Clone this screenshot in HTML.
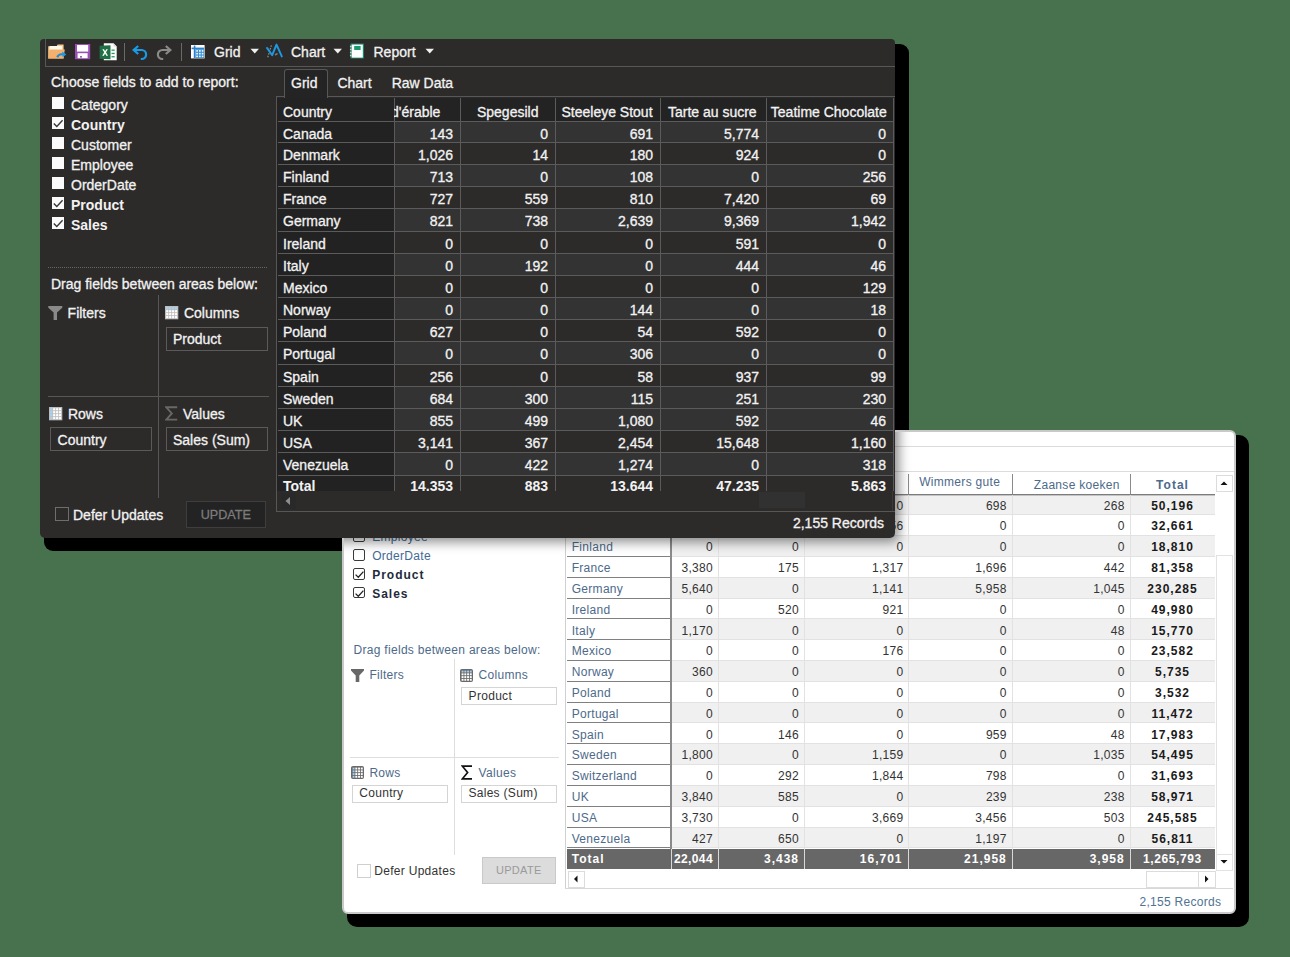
<!DOCTYPE html><html><head><meta charset="utf-8"><style>
html,body{margin:0;padding:0;}
body{width:1290px;height:957px;background:#48724d;position:relative;overflow:hidden;font-family:"Liberation Sans",sans-serif;}
.t{position:absolute;white-space:nowrap;line-height:normal;}
.dk .t{-webkit-text-stroke:0.3px currentColor;}
.dk .t.b{-webkit-text-stroke:0;}
</style></head><body>
<div style="position:absolute;left:44px;top:44px;width:865px;height:507px;background:#000;border-radius:9px;"></div>
<div style="position:absolute;left:347px;top:435px;width:902px;height:492px;background:#000;border-radius:10px;"></div>
<div style="position:absolute;left:342px;top:430px;width:890px;height:480px;background:#fff;border:2px solid #c9c9c9;border-radius:6px;overflow:hidden">
</div>
<div style="position:absolute;left:344px;top:446px;width:890px;height:1px;background:#dcdcdc;"></div>
<div style="position:absolute;left:344px;top:471px;width:890px;height:1px;background:#dcdcdc;"></div>
<div style="position:absolute;left:353px;top:530.4000000000001px;width:9.5px;height:9.5px;border:1.6px solid #3a3a3a;border-radius:2px;background:#fff;"></div>
<div class="t" style="left:372.20px;top:530.34px;font-size:12px;color:#3f6a96;font-weight:normal;letter-spacing:0.3px;">Employee</div>
<div style="position:absolute;left:353px;top:549.1px;width:9.5px;height:9.5px;border:1.6px solid #3a3a3a;border-radius:2px;background:#fff;"></div>
<div class="t" style="left:372.20px;top:549.04px;font-size:12px;color:#3f6a96;font-weight:normal;letter-spacing:0.3px;">OrderDate</div>
<div style="position:absolute;left:353px;top:568.0px;width:9.5px;height:9.5px;border:1.6px solid #3a3a3a;border-radius:2px;background:#fff;"></div>
<svg style="position:absolute;left:353px;top:568.0px" width="13" height="13" viewBox="0 0 13 13"><path d="M2.6 6.6 L5.3 9.2 L10.4 3.6" fill="none" stroke="#222" stroke-width="1.3"/></svg>
<div class="t b" style="left:372.20px;top:567.94px;font-size:12px;color:#1e2b3b;font-weight:bold;letter-spacing:1px;">Product</div>
<div style="position:absolute;left:353px;top:586.8000000000001px;width:9.5px;height:9.5px;border:1.6px solid #3a3a3a;border-radius:2px;background:#fff;"></div>
<svg style="position:absolute;left:353px;top:586.8000000000001px" width="13" height="13" viewBox="0 0 13 13"><path d="M2.6 6.6 L5.3 9.2 L10.4 3.6" fill="none" stroke="#222" stroke-width="1.3"/></svg>
<div class="t b" style="left:372.20px;top:586.74px;font-size:12px;color:#1e2b3b;font-weight:bold;letter-spacing:1px;">Sales</div>
<div class="t" style="left:353.50px;top:643.24px;font-size:12px;color:#4d6a8a;font-weight:normal;letter-spacing:0.3px;">Drag fields between areas below:</div>
<div style="position:absolute;left:454px;top:659px;width:1px;height:196px;background:#dedede;"></div>
<div style="position:absolute;left:350px;top:757px;width:209px;height:1px;background:#dedede;"></div>
<svg style="position:absolute;left:351px;top:669px" width="13" height="13" viewBox="0 0 13 13"><path d="M0 0 H13 V1.6 L8.3 6.4 V13 H4.7 V6.4 L0 1.6 Z" fill="#686868"/></svg>
<div class="t" style="left:369.40px;top:667.94px;font-size:12px;color:#4d6a8a;font-weight:normal;letter-spacing:0.3px;">Filters</div>
<svg style="position:absolute;left:460px;top:669px" width="13" height="13" viewBox="0 0 13 13"><rect x="0.5" y="0.5" width="12" height="12" fill="#6a6a6a" stroke="#6a6a6a" stroke-width="1" rx="1"/><rect x="1.60" y="1.60" width="1.9" height="1.9" fill="#9fd0f5"/><rect x="4.35" y="1.60" width="1.9" height="1.9" fill="#9fd0f5"/><rect x="7.10" y="1.60" width="1.9" height="1.9" fill="#9fd0f5"/><rect x="9.85" y="1.60" width="1.9" height="1.9" fill="#9fd0f5"/><rect x="1.60" y="4.35" width="1.9" height="1.9" fill="#fff"/><rect x="4.35" y="4.35" width="1.9" height="1.9" fill="#fff"/><rect x="7.10" y="4.35" width="1.9" height="1.9" fill="#fff"/><rect x="9.85" y="4.35" width="1.9" height="1.9" fill="#fff"/><rect x="1.60" y="7.10" width="1.9" height="1.9" fill="#fff"/><rect x="4.35" y="7.10" width="1.9" height="1.9" fill="#fff"/><rect x="7.10" y="7.10" width="1.9" height="1.9" fill="#fff"/><rect x="9.85" y="7.10" width="1.9" height="1.9" fill="#fff"/><rect x="1.60" y="9.85" width="1.9" height="1.9" fill="#fff"/><rect x="4.35" y="9.85" width="1.9" height="1.9" fill="#fff"/><rect x="7.10" y="9.85" width="1.9" height="1.9" fill="#fff"/><rect x="9.85" y="9.85" width="1.9" height="1.9" fill="#fff"/></svg>
<div class="t" style="left:478.60px;top:667.94px;font-size:12px;color:#4d6a8a;font-weight:normal;letter-spacing:0.3px;">Columns</div>
<div style="position:absolute;left:461px;top:687px;width:94px;height:16px;border:1px solid #d4d4d4;background:#fff;"></div>
<div class="t" style="left:468.60px;top:688.94px;font-size:12px;color:#333;font-weight:normal;letter-spacing:0.3px;">Product</div>
<svg style="position:absolute;left:351px;top:766px" width="13" height="13" viewBox="0 0 13 13"><rect x="0.5" y="0.5" width="12" height="12" fill="#6a6a6a" stroke="#6a6a6a" stroke-width="1" rx="1"/><rect x="1.60" y="1.60" width="1.9" height="1.9" fill="#9fd0f5"/><rect x="4.35" y="1.60" width="1.9" height="1.9" fill="#fff"/><rect x="7.10" y="1.60" width="1.9" height="1.9" fill="#fff"/><rect x="9.85" y="1.60" width="1.9" height="1.9" fill="#fff"/><rect x="1.60" y="4.35" width="1.9" height="1.9" fill="#9fd0f5"/><rect x="4.35" y="4.35" width="1.9" height="1.9" fill="#fff"/><rect x="7.10" y="4.35" width="1.9" height="1.9" fill="#fff"/><rect x="9.85" y="4.35" width="1.9" height="1.9" fill="#fff"/><rect x="1.60" y="7.10" width="1.9" height="1.9" fill="#9fd0f5"/><rect x="4.35" y="7.10" width="1.9" height="1.9" fill="#fff"/><rect x="7.10" y="7.10" width="1.9" height="1.9" fill="#fff"/><rect x="9.85" y="7.10" width="1.9" height="1.9" fill="#fff"/><rect x="1.60" y="9.85" width="1.9" height="1.9" fill="#9fd0f5"/><rect x="4.35" y="9.85" width="1.9" height="1.9" fill="#fff"/><rect x="7.10" y="9.85" width="1.9" height="1.9" fill="#fff"/><rect x="9.85" y="9.85" width="1.9" height="1.9" fill="#fff"/></svg>
<div class="t" style="left:369.40px;top:765.64px;font-size:12px;color:#4d6a8a;font-weight:normal;letter-spacing:0.3px;">Rows</div>
<svg style="position:absolute;left:461px;top:765px" width="12" height="15" viewBox="0 0 12 15"><path d="M11 1.2 H1.4 L6.6 7.5 L1.4 13.8 H11" fill="none" stroke="#111" stroke-width="1.7"/></svg>
<div class="t" style="left:478.60px;top:765.64px;font-size:12px;color:#4d6a8a;font-weight:normal;letter-spacing:0.3px;">Values</div>
<div style="position:absolute;left:352px;top:784.5px;width:94px;height:16px;border:1px solid #d4d4d4;background:#fff;"></div>
<div class="t" style="left:359.30px;top:786.44px;font-size:12px;color:#333;font-weight:normal;letter-spacing:0.3px;">Country</div>
<div style="position:absolute;left:461px;top:784.5px;width:94px;height:16px;border:1px solid #d4d4d4;background:#fff;"></div>
<div class="t" style="left:468.40px;top:786.44px;font-size:12px;color:#333;font-weight:normal;letter-spacing:0.3px;">Sales (Sum)</div>
<div style="position:absolute;left:357px;top:864px;width:12px;height:12px;border:1px solid #cfcfcf;background:#fff;"></div>
<div class="t" style="left:374.20px;top:863.94px;font-size:12px;color:#333;font-weight:normal;letter-spacing:0.3px;">Defer Updates</div>
<div style="position:absolute;left:482px;top:857px;width:72px;height:25px;border:1px solid #c9c9c9;background:#dcdcdc;"></div>
<div class="t" style="left:483.80px;top:864.34px;width:70px;text-align:center;font-size:11px;color:#9a9a9a;font-weight:normal;letter-spacing:0.3px;">UPDATE</div>
<div style="position:absolute;left:565px;top:471px;width:1px;height:418px;background:#d0d0d0;"></div>
<div style="position:absolute;left:565px;top:888px;width:668px;height:1px;background:#d8d8d8;"></div>
<div style="position:absolute;left:567px;top:494px;width:648px;height:1px;background:#7c7c7c;"></div>
<div style="position:absolute;left:567px;top:495px;width:648px;height:1px;background:#c4c4c4;"></div>
<div style="position:absolute;left:908px;top:474px;width:1px;height:20px;background:#8a8a8a;"></div>
<div style="position:absolute;left:1012px;top:474px;width:1px;height:20px;background:#8a8a8a;"></div>
<div style="position:absolute;left:1130px;top:474px;width:1px;height:20px;background:#8a8a8a;"></div>
<div style="position:absolute;left:671px;top:496px;width:544px;height:18px;background:#f0f0f0;"></div>
<div style="position:absolute;left:671px;top:514px;width:544px;height:1px;background:#e2e2e2;"></div>
<div style="position:absolute;left:567px;top:514px;width:104px;height:1px;background:#808080;"></div>
<div class="t" style="left:571.70px;top:498.64px;font-size:12px;color:#4d6a8a;font-weight:normal;letter-spacing:0.3px;">Canada</div>
<div class="t" style="left:803.50px;top:498.64px;width:100px;text-align:right;font-size:12px;color:#333;font-weight:normal;letter-spacing:0.3px;">0</div>
<div class="t" style="left:906.80px;top:498.64px;width:100px;text-align:right;font-size:12px;color:#333;font-weight:normal;letter-spacing:0.3px;">698</div>
<div class="t" style="left:1024.70px;top:498.64px;width:100px;text-align:right;font-size:12px;color:#333;font-weight:normal;letter-spacing:0.3px;">268</div>
<div class="t b" style="left:1130.50px;top:498.64px;width:84px;text-align:center;font-size:12px;color:#1a1a1a;font-weight:bold;letter-spacing:1px;">50,196</div>
<div style="position:absolute;left:671px;top:515px;width:544px;height:20px;background:#ffffff;"></div>
<div style="position:absolute;left:671px;top:535px;width:544px;height:1px;background:#e2e2e2;"></div>
<div style="position:absolute;left:567px;top:535px;width:104px;height:1px;background:#808080;"></div>
<div class="t" style="left:571.70px;top:519.46px;font-size:12px;color:#4d6a8a;font-weight:normal;letter-spacing:0.3px;">Denmark</div>
<div class="t" style="left:803.50px;top:519.46px;width:100px;text-align:right;font-size:12px;color:#333;font-weight:normal;letter-spacing:0.3px;">356</div>
<div class="t" style="left:906.80px;top:519.46px;width:100px;text-align:right;font-size:12px;color:#333;font-weight:normal;letter-spacing:0.3px;">0</div>
<div class="t" style="left:1024.70px;top:519.46px;width:100px;text-align:right;font-size:12px;color:#333;font-weight:normal;letter-spacing:0.3px;">0</div>
<div class="t b" style="left:1130.50px;top:519.46px;width:84px;text-align:center;font-size:12px;color:#1a1a1a;font-weight:bold;letter-spacing:1px;">32,661</div>
<div style="position:absolute;left:671px;top:536px;width:544px;height:20px;background:#f0f0f0;"></div>
<div style="position:absolute;left:671px;top:556px;width:544px;height:1px;background:#e2e2e2;"></div>
<div style="position:absolute;left:567px;top:556px;width:104px;height:1px;background:#808080;"></div>
<div class="t" style="left:571.70px;top:540.28px;font-size:12px;color:#4d6a8a;font-weight:normal;letter-spacing:0.3px;">Finland</div>
<div class="t" style="left:613.00px;top:540.28px;width:100px;text-align:right;font-size:12px;color:#333;font-weight:normal;letter-spacing:0.3px;">0</div>
<div class="t" style="left:699.00px;top:540.28px;width:100px;text-align:right;font-size:12px;color:#333;font-weight:normal;letter-spacing:0.3px;">0</div>
<div class="t" style="left:803.50px;top:540.28px;width:100px;text-align:right;font-size:12px;color:#333;font-weight:normal;letter-spacing:0.3px;">0</div>
<div class="t" style="left:906.80px;top:540.28px;width:100px;text-align:right;font-size:12px;color:#333;font-weight:normal;letter-spacing:0.3px;">0</div>
<div class="t" style="left:1024.70px;top:540.28px;width:100px;text-align:right;font-size:12px;color:#333;font-weight:normal;letter-spacing:0.3px;">0</div>
<div class="t b" style="left:1130.50px;top:540.28px;width:84px;text-align:center;font-size:12px;color:#1a1a1a;font-weight:bold;letter-spacing:1px;">18,810</div>
<div style="position:absolute;left:671px;top:557px;width:544px;height:20px;background:#ffffff;"></div>
<div style="position:absolute;left:671px;top:577px;width:544px;height:1px;background:#e2e2e2;"></div>
<div style="position:absolute;left:567px;top:577px;width:104px;height:1px;background:#808080;"></div>
<div class="t" style="left:571.70px;top:561.10px;font-size:12px;color:#4d6a8a;font-weight:normal;letter-spacing:0.3px;">France</div>
<div class="t" style="left:613.00px;top:561.10px;width:100px;text-align:right;font-size:12px;color:#333;font-weight:normal;letter-spacing:0.3px;">3,380</div>
<div class="t" style="left:699.00px;top:561.10px;width:100px;text-align:right;font-size:12px;color:#333;font-weight:normal;letter-spacing:0.3px;">175</div>
<div class="t" style="left:803.50px;top:561.10px;width:100px;text-align:right;font-size:12px;color:#333;font-weight:normal;letter-spacing:0.3px;">1,317</div>
<div class="t" style="left:906.80px;top:561.10px;width:100px;text-align:right;font-size:12px;color:#333;font-weight:normal;letter-spacing:0.3px;">1,696</div>
<div class="t" style="left:1024.70px;top:561.10px;width:100px;text-align:right;font-size:12px;color:#333;font-weight:normal;letter-spacing:0.3px;">442</div>
<div class="t b" style="left:1130.50px;top:561.10px;width:84px;text-align:center;font-size:12px;color:#1a1a1a;font-weight:bold;letter-spacing:1px;">81,358</div>
<div style="position:absolute;left:671px;top:578px;width:544px;height:20px;background:#f0f0f0;"></div>
<div style="position:absolute;left:671px;top:598px;width:544px;height:1px;background:#e2e2e2;"></div>
<div style="position:absolute;left:567px;top:598px;width:104px;height:1px;background:#808080;"></div>
<div class="t" style="left:571.70px;top:581.92px;font-size:12px;color:#4d6a8a;font-weight:normal;letter-spacing:0.3px;">Germany</div>
<div class="t" style="left:613.00px;top:581.92px;width:100px;text-align:right;font-size:12px;color:#333;font-weight:normal;letter-spacing:0.3px;">5,640</div>
<div class="t" style="left:699.00px;top:581.92px;width:100px;text-align:right;font-size:12px;color:#333;font-weight:normal;letter-spacing:0.3px;">0</div>
<div class="t" style="left:803.50px;top:581.92px;width:100px;text-align:right;font-size:12px;color:#333;font-weight:normal;letter-spacing:0.3px;">1,141</div>
<div class="t" style="left:906.80px;top:581.92px;width:100px;text-align:right;font-size:12px;color:#333;font-weight:normal;letter-spacing:0.3px;">5,958</div>
<div class="t" style="left:1024.70px;top:581.92px;width:100px;text-align:right;font-size:12px;color:#333;font-weight:normal;letter-spacing:0.3px;">1,045</div>
<div class="t b" style="left:1130.50px;top:581.92px;width:84px;text-align:center;font-size:12px;color:#1a1a1a;font-weight:bold;letter-spacing:1px;">230,285</div>
<div style="position:absolute;left:671px;top:599px;width:544px;height:19px;background:#ffffff;"></div>
<div style="position:absolute;left:671px;top:618px;width:544px;height:1px;background:#e2e2e2;"></div>
<div style="position:absolute;left:567px;top:618px;width:104px;height:1px;background:#808080;"></div>
<div class="t" style="left:571.70px;top:602.74px;font-size:12px;color:#4d6a8a;font-weight:normal;letter-spacing:0.3px;">Ireland</div>
<div class="t" style="left:613.00px;top:602.74px;width:100px;text-align:right;font-size:12px;color:#333;font-weight:normal;letter-spacing:0.3px;">0</div>
<div class="t" style="left:699.00px;top:602.74px;width:100px;text-align:right;font-size:12px;color:#333;font-weight:normal;letter-spacing:0.3px;">520</div>
<div class="t" style="left:803.50px;top:602.74px;width:100px;text-align:right;font-size:12px;color:#333;font-weight:normal;letter-spacing:0.3px;">921</div>
<div class="t" style="left:906.80px;top:602.74px;width:100px;text-align:right;font-size:12px;color:#333;font-weight:normal;letter-spacing:0.3px;">0</div>
<div class="t" style="left:1024.70px;top:602.74px;width:100px;text-align:right;font-size:12px;color:#333;font-weight:normal;letter-spacing:0.3px;">0</div>
<div class="t b" style="left:1130.50px;top:602.74px;width:84px;text-align:center;font-size:12px;color:#1a1a1a;font-weight:bold;letter-spacing:1px;">49,980</div>
<div style="position:absolute;left:671px;top:619px;width:544px;height:20px;background:#f0f0f0;"></div>
<div style="position:absolute;left:671px;top:639px;width:544px;height:1px;background:#e2e2e2;"></div>
<div style="position:absolute;left:567px;top:639px;width:104px;height:1px;background:#808080;"></div>
<div class="t" style="left:571.70px;top:623.56px;font-size:12px;color:#4d6a8a;font-weight:normal;letter-spacing:0.3px;">Italy</div>
<div class="t" style="left:613.00px;top:623.56px;width:100px;text-align:right;font-size:12px;color:#333;font-weight:normal;letter-spacing:0.3px;">1,170</div>
<div class="t" style="left:699.00px;top:623.56px;width:100px;text-align:right;font-size:12px;color:#333;font-weight:normal;letter-spacing:0.3px;">0</div>
<div class="t" style="left:803.50px;top:623.56px;width:100px;text-align:right;font-size:12px;color:#333;font-weight:normal;letter-spacing:0.3px;">0</div>
<div class="t" style="left:906.80px;top:623.56px;width:100px;text-align:right;font-size:12px;color:#333;font-weight:normal;letter-spacing:0.3px;">0</div>
<div class="t" style="left:1024.70px;top:623.56px;width:100px;text-align:right;font-size:12px;color:#333;font-weight:normal;letter-spacing:0.3px;">48</div>
<div class="t b" style="left:1130.50px;top:623.56px;width:84px;text-align:center;font-size:12px;color:#1a1a1a;font-weight:bold;letter-spacing:1px;">15,770</div>
<div style="position:absolute;left:671px;top:640px;width:544px;height:20px;background:#ffffff;"></div>
<div style="position:absolute;left:671px;top:660px;width:544px;height:1px;background:#e2e2e2;"></div>
<div style="position:absolute;left:567px;top:660px;width:104px;height:1px;background:#808080;"></div>
<div class="t" style="left:571.70px;top:644.38px;font-size:12px;color:#4d6a8a;font-weight:normal;letter-spacing:0.3px;">Mexico</div>
<div class="t" style="left:613.00px;top:644.38px;width:100px;text-align:right;font-size:12px;color:#333;font-weight:normal;letter-spacing:0.3px;">0</div>
<div class="t" style="left:699.00px;top:644.38px;width:100px;text-align:right;font-size:12px;color:#333;font-weight:normal;letter-spacing:0.3px;">0</div>
<div class="t" style="left:803.50px;top:644.38px;width:100px;text-align:right;font-size:12px;color:#333;font-weight:normal;letter-spacing:0.3px;">176</div>
<div class="t" style="left:906.80px;top:644.38px;width:100px;text-align:right;font-size:12px;color:#333;font-weight:normal;letter-spacing:0.3px;">0</div>
<div class="t" style="left:1024.70px;top:644.38px;width:100px;text-align:right;font-size:12px;color:#333;font-weight:normal;letter-spacing:0.3px;">0</div>
<div class="t b" style="left:1130.50px;top:644.38px;width:84px;text-align:center;font-size:12px;color:#1a1a1a;font-weight:bold;letter-spacing:1px;">23,582</div>
<div style="position:absolute;left:671px;top:661px;width:544px;height:20px;background:#f0f0f0;"></div>
<div style="position:absolute;left:671px;top:681px;width:544px;height:1px;background:#e2e2e2;"></div>
<div style="position:absolute;left:567px;top:681px;width:104px;height:1px;background:#808080;"></div>
<div class="t" style="left:571.70px;top:665.20px;font-size:12px;color:#4d6a8a;font-weight:normal;letter-spacing:0.3px;">Norway</div>
<div class="t" style="left:613.00px;top:665.20px;width:100px;text-align:right;font-size:12px;color:#333;font-weight:normal;letter-spacing:0.3px;">360</div>
<div class="t" style="left:699.00px;top:665.20px;width:100px;text-align:right;font-size:12px;color:#333;font-weight:normal;letter-spacing:0.3px;">0</div>
<div class="t" style="left:803.50px;top:665.20px;width:100px;text-align:right;font-size:12px;color:#333;font-weight:normal;letter-spacing:0.3px;">0</div>
<div class="t" style="left:906.80px;top:665.20px;width:100px;text-align:right;font-size:12px;color:#333;font-weight:normal;letter-spacing:0.3px;">0</div>
<div class="t" style="left:1024.70px;top:665.20px;width:100px;text-align:right;font-size:12px;color:#333;font-weight:normal;letter-spacing:0.3px;">0</div>
<div class="t b" style="left:1130.50px;top:665.20px;width:84px;text-align:center;font-size:12px;color:#1a1a1a;font-weight:bold;letter-spacing:1px;">5,735</div>
<div style="position:absolute;left:671px;top:682px;width:544px;height:20px;background:#ffffff;"></div>
<div style="position:absolute;left:671px;top:702px;width:544px;height:1px;background:#e2e2e2;"></div>
<div style="position:absolute;left:567px;top:702px;width:104px;height:1px;background:#808080;"></div>
<div class="t" style="left:571.70px;top:686.02px;font-size:12px;color:#4d6a8a;font-weight:normal;letter-spacing:0.3px;">Poland</div>
<div class="t" style="left:613.00px;top:686.02px;width:100px;text-align:right;font-size:12px;color:#333;font-weight:normal;letter-spacing:0.3px;">0</div>
<div class="t" style="left:699.00px;top:686.02px;width:100px;text-align:right;font-size:12px;color:#333;font-weight:normal;letter-spacing:0.3px;">0</div>
<div class="t" style="left:803.50px;top:686.02px;width:100px;text-align:right;font-size:12px;color:#333;font-weight:normal;letter-spacing:0.3px;">0</div>
<div class="t" style="left:906.80px;top:686.02px;width:100px;text-align:right;font-size:12px;color:#333;font-weight:normal;letter-spacing:0.3px;">0</div>
<div class="t" style="left:1024.70px;top:686.02px;width:100px;text-align:right;font-size:12px;color:#333;font-weight:normal;letter-spacing:0.3px;">0</div>
<div class="t b" style="left:1130.50px;top:686.02px;width:84px;text-align:center;font-size:12px;color:#1a1a1a;font-weight:bold;letter-spacing:1px;">3,532</div>
<div style="position:absolute;left:671px;top:703px;width:544px;height:19px;background:#f0f0f0;"></div>
<div style="position:absolute;left:671px;top:722px;width:544px;height:1px;background:#e2e2e2;"></div>
<div style="position:absolute;left:567px;top:722px;width:104px;height:1px;background:#808080;"></div>
<div class="t" style="left:571.70px;top:706.84px;font-size:12px;color:#4d6a8a;font-weight:normal;letter-spacing:0.3px;">Portugal</div>
<div class="t" style="left:613.00px;top:706.84px;width:100px;text-align:right;font-size:12px;color:#333;font-weight:normal;letter-spacing:0.3px;">0</div>
<div class="t" style="left:699.00px;top:706.84px;width:100px;text-align:right;font-size:12px;color:#333;font-weight:normal;letter-spacing:0.3px;">0</div>
<div class="t" style="left:803.50px;top:706.84px;width:100px;text-align:right;font-size:12px;color:#333;font-weight:normal;letter-spacing:0.3px;">0</div>
<div class="t" style="left:906.80px;top:706.84px;width:100px;text-align:right;font-size:12px;color:#333;font-weight:normal;letter-spacing:0.3px;">0</div>
<div class="t" style="left:1024.70px;top:706.84px;width:100px;text-align:right;font-size:12px;color:#333;font-weight:normal;letter-spacing:0.3px;">0</div>
<div class="t b" style="left:1130.50px;top:706.84px;width:84px;text-align:center;font-size:12px;color:#1a1a1a;font-weight:bold;letter-spacing:1px;">11,472</div>
<div style="position:absolute;left:671px;top:724px;width:544px;height:19px;background:#ffffff;"></div>
<div style="position:absolute;left:671px;top:743px;width:544px;height:1px;background:#e2e2e2;"></div>
<div style="position:absolute;left:567px;top:743px;width:104px;height:1px;background:#808080;"></div>
<div class="t" style="left:571.70px;top:727.66px;font-size:12px;color:#4d6a8a;font-weight:normal;letter-spacing:0.3px;">Spain</div>
<div class="t" style="left:613.00px;top:727.66px;width:100px;text-align:right;font-size:12px;color:#333;font-weight:normal;letter-spacing:0.3px;">0</div>
<div class="t" style="left:699.00px;top:727.66px;width:100px;text-align:right;font-size:12px;color:#333;font-weight:normal;letter-spacing:0.3px;">146</div>
<div class="t" style="left:803.50px;top:727.66px;width:100px;text-align:right;font-size:12px;color:#333;font-weight:normal;letter-spacing:0.3px;">0</div>
<div class="t" style="left:906.80px;top:727.66px;width:100px;text-align:right;font-size:12px;color:#333;font-weight:normal;letter-spacing:0.3px;">959</div>
<div class="t" style="left:1024.70px;top:727.66px;width:100px;text-align:right;font-size:12px;color:#333;font-weight:normal;letter-spacing:0.3px;">48</div>
<div class="t b" style="left:1130.50px;top:727.66px;width:84px;text-align:center;font-size:12px;color:#1a1a1a;font-weight:bold;letter-spacing:1px;">17,983</div>
<div style="position:absolute;left:671px;top:744px;width:544px;height:20px;background:#f0f0f0;"></div>
<div style="position:absolute;left:671px;top:764px;width:544px;height:1px;background:#e2e2e2;"></div>
<div style="position:absolute;left:567px;top:764px;width:104px;height:1px;background:#808080;"></div>
<div class="t" style="left:571.70px;top:748.48px;font-size:12px;color:#4d6a8a;font-weight:normal;letter-spacing:0.3px;">Sweden</div>
<div class="t" style="left:613.00px;top:748.48px;width:100px;text-align:right;font-size:12px;color:#333;font-weight:normal;letter-spacing:0.3px;">1,800</div>
<div class="t" style="left:699.00px;top:748.48px;width:100px;text-align:right;font-size:12px;color:#333;font-weight:normal;letter-spacing:0.3px;">0</div>
<div class="t" style="left:803.50px;top:748.48px;width:100px;text-align:right;font-size:12px;color:#333;font-weight:normal;letter-spacing:0.3px;">1,159</div>
<div class="t" style="left:906.80px;top:748.48px;width:100px;text-align:right;font-size:12px;color:#333;font-weight:normal;letter-spacing:0.3px;">0</div>
<div class="t" style="left:1024.70px;top:748.48px;width:100px;text-align:right;font-size:12px;color:#333;font-weight:normal;letter-spacing:0.3px;">1,035</div>
<div class="t b" style="left:1130.50px;top:748.48px;width:84px;text-align:center;font-size:12px;color:#1a1a1a;font-weight:bold;letter-spacing:1px;">54,495</div>
<div style="position:absolute;left:671px;top:765px;width:544px;height:20px;background:#ffffff;"></div>
<div style="position:absolute;left:671px;top:785px;width:544px;height:1px;background:#e2e2e2;"></div>
<div style="position:absolute;left:567px;top:785px;width:104px;height:1px;background:#808080;"></div>
<div class="t" style="left:571.70px;top:769.30px;font-size:12px;color:#4d6a8a;font-weight:normal;letter-spacing:0.3px;">Switzerland</div>
<div class="t" style="left:613.00px;top:769.30px;width:100px;text-align:right;font-size:12px;color:#333;font-weight:normal;letter-spacing:0.3px;">0</div>
<div class="t" style="left:699.00px;top:769.30px;width:100px;text-align:right;font-size:12px;color:#333;font-weight:normal;letter-spacing:0.3px;">292</div>
<div class="t" style="left:803.50px;top:769.30px;width:100px;text-align:right;font-size:12px;color:#333;font-weight:normal;letter-spacing:0.3px;">1,844</div>
<div class="t" style="left:906.80px;top:769.30px;width:100px;text-align:right;font-size:12px;color:#333;font-weight:normal;letter-spacing:0.3px;">798</div>
<div class="t" style="left:1024.70px;top:769.30px;width:100px;text-align:right;font-size:12px;color:#333;font-weight:normal;letter-spacing:0.3px;">0</div>
<div class="t b" style="left:1130.50px;top:769.30px;width:84px;text-align:center;font-size:12px;color:#1a1a1a;font-weight:bold;letter-spacing:1px;">31,693</div>
<div style="position:absolute;left:671px;top:786px;width:544px;height:20px;background:#f0f0f0;"></div>
<div style="position:absolute;left:671px;top:806px;width:544px;height:1px;background:#e2e2e2;"></div>
<div style="position:absolute;left:567px;top:806px;width:104px;height:1px;background:#808080;"></div>
<div class="t" style="left:571.70px;top:790.12px;font-size:12px;color:#4d6a8a;font-weight:normal;letter-spacing:0.3px;">UK</div>
<div class="t" style="left:613.00px;top:790.12px;width:100px;text-align:right;font-size:12px;color:#333;font-weight:normal;letter-spacing:0.3px;">3,840</div>
<div class="t" style="left:699.00px;top:790.12px;width:100px;text-align:right;font-size:12px;color:#333;font-weight:normal;letter-spacing:0.3px;">585</div>
<div class="t" style="left:803.50px;top:790.12px;width:100px;text-align:right;font-size:12px;color:#333;font-weight:normal;letter-spacing:0.3px;">0</div>
<div class="t" style="left:906.80px;top:790.12px;width:100px;text-align:right;font-size:12px;color:#333;font-weight:normal;letter-spacing:0.3px;">239</div>
<div class="t" style="left:1024.70px;top:790.12px;width:100px;text-align:right;font-size:12px;color:#333;font-weight:normal;letter-spacing:0.3px;">238</div>
<div class="t b" style="left:1130.50px;top:790.12px;width:84px;text-align:center;font-size:12px;color:#1a1a1a;font-weight:bold;letter-spacing:1px;">58,971</div>
<div style="position:absolute;left:671px;top:807px;width:544px;height:20px;background:#ffffff;"></div>
<div style="position:absolute;left:671px;top:827px;width:544px;height:1px;background:#e2e2e2;"></div>
<div style="position:absolute;left:567px;top:827px;width:104px;height:1px;background:#808080;"></div>
<div class="t" style="left:571.70px;top:810.94px;font-size:12px;color:#4d6a8a;font-weight:normal;letter-spacing:0.3px;">USA</div>
<div class="t" style="left:613.00px;top:810.94px;width:100px;text-align:right;font-size:12px;color:#333;font-weight:normal;letter-spacing:0.3px;">3,730</div>
<div class="t" style="left:699.00px;top:810.94px;width:100px;text-align:right;font-size:12px;color:#333;font-weight:normal;letter-spacing:0.3px;">0</div>
<div class="t" style="left:803.50px;top:810.94px;width:100px;text-align:right;font-size:12px;color:#333;font-weight:normal;letter-spacing:0.3px;">3,669</div>
<div class="t" style="left:906.80px;top:810.94px;width:100px;text-align:right;font-size:12px;color:#333;font-weight:normal;letter-spacing:0.3px;">3,456</div>
<div class="t" style="left:1024.70px;top:810.94px;width:100px;text-align:right;font-size:12px;color:#333;font-weight:normal;letter-spacing:0.3px;">503</div>
<div class="t b" style="left:1130.50px;top:810.94px;width:84px;text-align:center;font-size:12px;color:#1a1a1a;font-weight:bold;letter-spacing:1px;">245,585</div>
<div style="position:absolute;left:671px;top:828px;width:544px;height:19px;background:#f0f0f0;"></div>
<div style="position:absolute;left:671px;top:847px;width:544px;height:1px;background:#e2e2e2;"></div>
<div style="position:absolute;left:567px;top:847px;width:104px;height:1px;background:#808080;"></div>
<div class="t" style="left:571.70px;top:831.76px;font-size:12px;color:#4d6a8a;font-weight:normal;letter-spacing:0.3px;">Venezuela</div>
<div class="t" style="left:613.00px;top:831.76px;width:100px;text-align:right;font-size:12px;color:#333;font-weight:normal;letter-spacing:0.3px;">427</div>
<div class="t" style="left:699.00px;top:831.76px;width:100px;text-align:right;font-size:12px;color:#333;font-weight:normal;letter-spacing:0.3px;">650</div>
<div class="t" style="left:803.50px;top:831.76px;width:100px;text-align:right;font-size:12px;color:#333;font-weight:normal;letter-spacing:0.3px;">0</div>
<div class="t" style="left:906.80px;top:831.76px;width:100px;text-align:right;font-size:12px;color:#333;font-weight:normal;letter-spacing:0.3px;">1,197</div>
<div class="t" style="left:1024.70px;top:831.76px;width:100px;text-align:right;font-size:12px;color:#333;font-weight:normal;letter-spacing:0.3px;">0</div>
<div class="t b" style="left:1130.50px;top:831.76px;width:84px;text-align:center;font-size:12px;color:#1a1a1a;font-weight:bold;letter-spacing:1px;">56,811</div>
<div style="position:absolute;left:718px;top:495px;width:1px;height:354px;background:#e2e2e2;"></div>
<div style="position:absolute;left:804px;top:495px;width:1px;height:354px;background:#e2e2e2;"></div>
<div style="position:absolute;left:908px;top:495px;width:1px;height:354px;background:#e2e2e2;"></div>
<div style="position:absolute;left:1012px;top:495px;width:1px;height:354px;background:#e2e2e2;"></div>
<div style="position:absolute;left:1130px;top:495px;width:1px;height:354px;background:#e2e2e2;"></div>
<div style="position:absolute;left:670px;top:495px;width:1.5px;height:374px;background:#8a8a8a;"></div>
<div style="position:absolute;left:567px;top:849px;width:648px;height:20px;background:#676767;"></div>
<div style="position:absolute;left:670.5px;top:849px;width:1px;height:20px;background:#d8d8d8;"></div>
<div style="position:absolute;left:718px;top:849px;width:1px;height:20px;background:#d8d8d8;"></div>
<div style="position:absolute;left:804px;top:849px;width:1px;height:20px;background:#d8d8d8;"></div>
<div style="position:absolute;left:908px;top:849px;width:1px;height:20px;background:#d8d8d8;"></div>
<div style="position:absolute;left:1012px;top:849px;width:1px;height:20px;background:#d8d8d8;"></div>
<div style="position:absolute;left:1130px;top:849px;width:1px;height:20px;background:#d8d8d8;"></div>
<div class="t b" style="left:571.70px;top:852.44px;font-size:12px;color:#fff;font-weight:bold;letter-spacing:1px;">Total</div>
<div class="t b" style="left:613.00px;top:852.44px;width:100px;text-align:right;font-size:12px;color:#fff;font-weight:bold;letter-spacing:0.4px;">22,044</div>
<div class="t b" style="left:699.00px;top:852.44px;width:100px;text-align:right;font-size:12px;color:#fff;font-weight:bold;letter-spacing:1px;">3,438</div>
<div class="t b" style="left:802.50px;top:852.44px;width:100px;text-align:right;font-size:12px;color:#fff;font-weight:bold;letter-spacing:1px;">16,701</div>
<div class="t b" style="left:906.80px;top:852.44px;width:100px;text-align:right;font-size:12px;color:#fff;font-weight:bold;letter-spacing:1px;">21,958</div>
<div class="t b" style="left:1024.70px;top:852.44px;width:100px;text-align:right;font-size:12px;color:#fff;font-weight:bold;letter-spacing:1px;">3,958</div>
<div class="t b" style="left:1130.50px;top:852.44px;width:84px;text-align:center;font-size:12px;color:#fff;font-weight:bold;letter-spacing:0.6px;">1,265,793</div>
<div class="t" style="left:919.20px;top:475.34px;font-size:12px;color:#4d6a8a;font-weight:normal;letter-spacing:0.3px;">Wimmers gute</div>
<div class="t" style="left:1033.80px;top:478.44px;font-size:12px;color:#4d6a8a;font-weight:normal;letter-spacing:0.3px;">Zaanse koeken</div>
<div class="t b" style="left:1130.50px;top:478.44px;width:84px;text-align:center;font-size:12px;color:#4d6a8a;font-weight:bold;letter-spacing:1px;">Total</div>
<div style="position:absolute;left:1215.5px;top:474.5px;width:15px;height:15px;border:1px solid #dcdcdc;background:#fff;"></div>
<svg style="position:absolute;left:1216px;top:475px" width="16" height="16" viewBox="0 0 16 16"><path d="M4.5 10 L8 6.5 L11.5 10 Z" fill="#111"/></svg>
<div style="position:absolute;left:1215.5px;top:555px;width:15px;height:298px;border:1px solid #e2e2e2;border-bottom:none;background:#fff;"></div>
<div style="position:absolute;left:1215.5px;top:853.5px;width:15px;height:15px;border:1px solid #e2e2e2;background:#fff;"></div>
<svg style="position:absolute;left:1216px;top:854px" width="16" height="16" viewBox="0 0 16 16"><path d="M4.5 6 L8 9.5 L11.5 6 Z" fill="#111"/></svg>
<div style="position:absolute;left:567.5px;top:870.5px;width:15px;height:15px;border:1px solid #dcdcdc;background:#fff;"></div>
<svg style="position:absolute;left:568px;top:871px" width="16" height="16" viewBox="0 0 16 16"><path d="M9.5 4.5 L6 8 L9.5 11.5 Z" fill="#111"/></svg>
<div style="position:absolute;left:1146px;top:870.5px;width:52px;height:15px;border:1px solid #dcdcdc;background:#fff;"></div>
<div style="position:absolute;left:1198px;top:870.5px;width:16px;height:15px;border:1px solid #dcdcdc;background:#fff;"></div>
<svg style="position:absolute;left:1198px;top:871px" width="17" height="16" viewBox="0 0 17 16"><path d="M7 4.5 L10.5 8 L7 11.5 Z" fill="#111"/></svg>
<div class="t" style="left:1071.40px;top:894.74px;width:150px;text-align:right;font-size:12px;color:#4f7394;font-weight:normal;letter-spacing:0.3px;">2,155 Records</div>
<div style="position:absolute;left:344px;top:432px;width:890px;height:480px;overflow:hidden">
<div style="position:absolute;left:-304px;top:-393px;width:855px;height:499px;border-radius:6px;box-shadow:3px 3px 12px 1px rgba(0,0,0,0.45);"></div>
</div>
<div class="dk">
<div style="position:absolute;left:40px;top:39px;width:855px;height:499px;background:#2d2b2a;border-radius:4px 4px 5px 5px;"></div>
<div style="position:absolute;left:45px;top:39px;width:849px;height:27px;border-left:1px solid #575757;border-bottom:1px solid #575757;"></div>
<svg style="position:absolute;left:48px;top:44px" width="19" height="16" viewBox="0 0 19 16"><path d="M0.2 2.2 H8.6 L9.6 0.4 H15.6 V14.6 H0.2 Z" fill="#f7c88c"/><rect x="1.6" y="2.0" width="12.6" height="4.2" fill="#fff8ec"/><path d="M0.2 14.6 L1.6 5.6 H16.8 L15.4 14.6 Z" fill="#f5b16c"/><path d="M9.2 13.2 Q10.8 9.6 15.2 10.4" fill="none" stroke="#1b8ee0" stroke-width="2.2"/><path d="M14.2 7.6 L18.4 10.6 L14.6 13.2 Z" fill="#1b9ae8"/></svg>
<svg style="position:absolute;left:75px;top:43.5px" width="16" height="16" viewBox="0 0 16 16"><rect x="0" y="0" width="15.2" height="15.2" fill="#9a4fb6"/><rect x="2" y="1" width="11.2" height="6.6" fill="#fff"/><rect x="2.6" y="9.2" width="10" height="5" fill="#fff"/><circle cx="6" cy="12.8" r="0.9" fill="#5a2a80"/></svg>
<svg style="position:absolute;left:98.5px;top:42.5px" width="19" height="18" viewBox="0 0 19 18"><path d="M4.8 0.3 H14.5 L17.7 3.5 V17.3 H4.8 Z" fill="#fff"/><path d="M14.5 0.3 V3.5 H17.7 Z" fill="#d9d9d9"/><rect x="12.5" y="6.5" width="3.2" height="1.3" fill="#2a9a5a"/><rect x="12.5" y="9.8" width="3.2" height="1.3" fill="#2a9a5a"/><rect x="12.5" y="13.1" width="3.2" height="1.3" fill="#2a9a5a"/><path d="M0.6 2.8 L11.5 2.2 V16.2 L0.6 15.8 Z" fill="#1f7145"/><path d="M3.3 6.2 H5 L6.1 8.2 L7.2 6.2 H8.9 L7 9.3 L9 12.7 H7.3 L6.1 10.5 L4.9 12.7 H3.2 L5.2 9.3 Z" fill="#fff"/></svg>
<svg style="position:absolute;left:132px;top:44.5px" width="17" height="16" viewBox="0 0 17 16"><path d="M6.2 1 L1.6 5 L6.2 9" fill="none" stroke="#1a9be6" stroke-width="2.2"/><path d="M2 5 H9.6 A4.5 4.5 0 0 1 9.6 14 H8.8" fill="none" stroke="#1a9be6" stroke-width="2.2"/></svg>
<svg style="position:absolute;left:155px;top:44.5px" width="17" height="16" viewBox="0 0 17 16"><path d="M10.8 1 L15.4 5 L10.8 9" fill="none" stroke="#8a8a8a" stroke-width="2.2"/><path d="M15 5 H7.4 A4.5 4.5 0 0 0 7.4 14 H8.2" fill="none" stroke="#8a8a8a" stroke-width="2.2"/></svg>
<svg style="position:absolute;left:191px;top:45px" width="14" height="14" viewBox="0 0 14 14"><rect x="0" y="0" width="13.6" height="13.4" fill="#fff"/><rect x="2.8" y="0.6" width="1.6" height="12.4" fill="#2a82cc"/><rect x="0.6" y="2.6" width="12.4" height="1.6" fill="#2a82cc"/><rect x="4.4" y="4.2" width="8.6" height="8.8" fill="#3a8fd2"/><rect x="5.30" y="5.10" width="1.6" height="1.6" fill="#fff"/><rect x="8.05" y="5.10" width="1.6" height="1.6" fill="#fff"/><rect x="10.80" y="5.10" width="1.6" height="1.6" fill="#fff"/><rect x="5.30" y="7.85" width="1.6" height="1.6" fill="#fff"/><rect x="8.05" y="7.85" width="1.6" height="1.6" fill="#fff"/><rect x="10.80" y="7.85" width="1.6" height="1.6" fill="#fff"/><rect x="5.30" y="10.60" width="1.6" height="1.6" fill="#fff"/><rect x="8.05" y="10.60" width="1.6" height="1.6" fill="#fff"/><rect x="10.80" y="10.60" width="1.6" height="1.6" fill="#fff"/></svg>
<svg style="position:absolute;left:265px;top:43px" width="20" height="16" viewBox="0 0 20 16"><path d="M2.8 14.2 L6.5 2" fill="none" stroke="#888" stroke-width="1.3" stroke-dasharray="1.5 1.2"/><path d="M10 12 L12.5 10.5" fill="none" stroke="#777" stroke-width="1.5"/><path d="M2 4.9 L7.2 12.2 L11.5 1.6 L16.8 13.4" fill="none" stroke="#1d9ae6" stroke-width="1.9" stroke-linejoin="round" stroke-linecap="round"/></svg>
<svg style="position:absolute;left:349px;top:43px" width="16" height="17" viewBox="0 0 16 17"><rect x="1.6" y="0.6" width="13.2" height="14.8" fill="#1b9a7a"/><rect x="2.8" y="1.6" width="11" height="13" fill="#fff"/><rect x="5.2" y="3" width="6.4" height="4" fill="#1a9a6c"/><circle cx="1.8" cy="3.5" r="0.9" fill="#ccc"/><circle cx="1.8" cy="6.5" r="0.9" fill="#ccc"/><circle cx="1.8" cy="9.5" r="0.9" fill="#ccc"/><circle cx="1.8" cy="12.5" r="0.9" fill="#ccc"/></svg>
<div class="t" style="left:214.00px;top:43.93px;font-size:14px;color:#f2f2f2;font-weight:normal;">Grid</div>
<div class="t" style="left:291.00px;top:43.93px;font-size:14px;color:#f2f2f2;font-weight:normal;">Chart</div>
<div class="t" style="left:373.50px;top:43.93px;font-size:14px;color:#f2f2f2;font-weight:normal;">Report</div>
<svg style="position:absolute;left:249.5px;top:48px" width="10" height="7" viewBox="0 0 10 7"><path d="M0.5 0.8 H9 L4.75 5.6 Z" fill="#f0f0f0"/></svg>
<svg style="position:absolute;left:333px;top:48px" width="10" height="7" viewBox="0 0 10 7"><path d="M0.5 0.8 H9 L4.75 5.6 Z" fill="#f0f0f0"/></svg>
<svg style="position:absolute;left:425px;top:48px" width="10" height="7" viewBox="0 0 10 7"><path d="M0.5 0.8 H9 L4.75 5.6 Z" fill="#f0f0f0"/></svg>
<div style="position:absolute;left:124px;top:43px;width:1.4px;height:18px;background:#6a6a6a;"></div>
<div style="position:absolute;left:181px;top:43px;width:1.4px;height:18px;background:#6a6a6a;"></div>
<div class="t" style="left:51.00px;top:74.13px;font-size:14px;color:#f2f2f2;font-weight:normal;">Choose fields to add to report:</div>
<div style="position:absolute;left:51.5px;top:97.2px;width:12.3px;height:12.3px;background:#fbfbfb;"></div>
<div class="t" style="left:71.00px;top:96.73px;font-size:14px;color:#f2f2f2;font-weight:normal;">Category</div>
<div style="position:absolute;left:51.5px;top:117.2px;width:12.3px;height:12.3px;background:#fbfbfb;"></div>
<svg style="position:absolute;left:51.5px;top:117.2px" width="13" height="13" viewBox="0 0 13 13"><path d="M1.8 6.4 L4.8 9.4 L10.6 3.2" fill="none" stroke="#3a3a3a" stroke-width="1.4"/></svg>
<div class="t b" style="left:71.00px;top:116.73px;font-size:14px;color:#f2f2f2;font-weight:bold;">Country</div>
<div style="position:absolute;left:51.5px;top:137.2px;width:12.3px;height:12.3px;background:#fbfbfb;"></div>
<div class="t" style="left:71.00px;top:136.73px;font-size:14px;color:#f2f2f2;font-weight:normal;">Customer</div>
<div style="position:absolute;left:51.5px;top:157.2px;width:12.3px;height:12.3px;background:#fbfbfb;"></div>
<div class="t" style="left:71.00px;top:156.73px;font-size:14px;color:#f2f2f2;font-weight:normal;">Employee</div>
<div style="position:absolute;left:51.5px;top:177.2px;width:12.3px;height:12.3px;background:#fbfbfb;"></div>
<div class="t" style="left:71.00px;top:176.73px;font-size:14px;color:#f2f2f2;font-weight:normal;">OrderDate</div>
<div style="position:absolute;left:51.5px;top:197.2px;width:12.3px;height:12.3px;background:#fbfbfb;"></div>
<svg style="position:absolute;left:51.5px;top:197.2px" width="13" height="13" viewBox="0 0 13 13"><path d="M1.8 6.4 L4.8 9.4 L10.6 3.2" fill="none" stroke="#3a3a3a" stroke-width="1.4"/></svg>
<div class="t b" style="left:71.00px;top:196.73px;font-size:14px;color:#f2f2f2;font-weight:bold;">Product</div>
<div style="position:absolute;left:51.5px;top:217.2px;width:12.3px;height:12.3px;background:#fbfbfb;"></div>
<svg style="position:absolute;left:51.5px;top:217.2px" width="13" height="13" viewBox="0 0 13 13"><path d="M1.8 6.4 L4.8 9.4 L10.6 3.2" fill="none" stroke="#3a3a3a" stroke-width="1.4"/></svg>
<div class="t b" style="left:71.00px;top:216.73px;font-size:14px;color:#f2f2f2;font-weight:bold;">Sales</div>
<div style="position:absolute;left:48px;top:267px;width:220px;height:1px;background-image:linear-gradient(90deg,#666 50%,transparent 50%);background-size:2px 1px;"></div>
<div class="t" style="left:51.00px;top:276.33px;font-size:14px;color:#f2f2f2;font-weight:normal;">Drag fields between areas below:</div>
<div style="position:absolute;left:158px;top:295px;width:1px;height:203px;background:#575757;"></div>
<div style="position:absolute;left:48px;top:396px;width:221px;height:1px;background:#575757;"></div>
<svg style="position:absolute;left:48px;top:306px" width="15" height="14" viewBox="0 0 15 14"><path d="M0.3 0 H14.3 V1.8 L9 6.5 V14 H5.6 V6.5 L0.3 1.8 Z" fill="#8a8a8a"/></svg>
<div class="t" style="left:67.60px;top:305.33px;font-size:14px;color:#f2f2f2;font-weight:normal;">Filters</div>
<svg style="position:absolute;left:165px;top:306.2px" width="14" height="14" viewBox="0 0 14 14"><rect x="0" y="0" width="13.3" height="13.3" fill="#bdbdbd"/><rect x="1.20" y="1.20" width="2.1" height="2.1" fill="#a8d4f4"/><rect x="4.15" y="1.20" width="2.1" height="2.1" fill="#a8d4f4"/><rect x="7.10" y="1.20" width="2.1" height="2.1" fill="#a8d4f4"/><rect x="10.05" y="1.20" width="2.1" height="2.1" fill="#a8d4f4"/><rect x="1.20" y="4.15" width="2.1" height="2.1" fill="#ffffff"/><rect x="4.15" y="4.15" width="2.1" height="2.1" fill="#ffffff"/><rect x="7.10" y="4.15" width="2.1" height="2.1" fill="#ffffff"/><rect x="10.05" y="4.15" width="2.1" height="2.1" fill="#ffffff"/><rect x="1.20" y="7.10" width="2.1" height="2.1" fill="#ffffff"/><rect x="4.15" y="7.10" width="2.1" height="2.1" fill="#ffffff"/><rect x="7.10" y="7.10" width="2.1" height="2.1" fill="#ffffff"/><rect x="10.05" y="7.10" width="2.1" height="2.1" fill="#ffffff"/><rect x="1.20" y="10.05" width="2.1" height="2.1" fill="#ffffff"/><rect x="4.15" y="10.05" width="2.1" height="2.1" fill="#ffffff"/><rect x="7.10" y="10.05" width="2.1" height="2.1" fill="#ffffff"/><rect x="10.05" y="10.05" width="2.1" height="2.1" fill="#ffffff"/></svg>
<div class="t" style="left:183.90px;top:305.33px;font-size:14px;color:#f2f2f2;font-weight:normal;">Columns</div>
<div style="position:absolute;left:165.5px;top:326.5px;width:100px;height:22px;border:1px solid #5a5a5a;"></div>
<div class="t" style="left:173.00px;top:330.53px;font-size:14px;color:#f2f2f2;font-weight:normal;">Product</div>
<svg style="position:absolute;left:49px;top:407.4px" width="14" height="14" viewBox="0 0 14 14"><rect x="0" y="0" width="13.3" height="13.3" fill="#bdbdbd"/><rect x="1.20" y="1.20" width="2.1" height="2.1" fill="#a8d4f4"/><rect x="4.15" y="1.20" width="2.1" height="2.1" fill="#ffffff"/><rect x="7.10" y="1.20" width="2.1" height="2.1" fill="#ffffff"/><rect x="10.05" y="1.20" width="2.1" height="2.1" fill="#ffffff"/><rect x="1.20" y="4.15" width="2.1" height="2.1" fill="#a8d4f4"/><rect x="4.15" y="4.15" width="2.1" height="2.1" fill="#ffffff"/><rect x="7.10" y="4.15" width="2.1" height="2.1" fill="#ffffff"/><rect x="10.05" y="4.15" width="2.1" height="2.1" fill="#ffffff"/><rect x="1.20" y="7.10" width="2.1" height="2.1" fill="#a8d4f4"/><rect x="4.15" y="7.10" width="2.1" height="2.1" fill="#ffffff"/><rect x="7.10" y="7.10" width="2.1" height="2.1" fill="#ffffff"/><rect x="10.05" y="7.10" width="2.1" height="2.1" fill="#ffffff"/><rect x="1.20" y="10.05" width="2.1" height="2.1" fill="#a8d4f4"/><rect x="4.15" y="10.05" width="2.1" height="2.1" fill="#ffffff"/><rect x="7.10" y="10.05" width="2.1" height="2.1" fill="#ffffff"/><rect x="10.05" y="10.05" width="2.1" height="2.1" fill="#ffffff"/></svg>
<div class="t" style="left:67.90px;top:406.23px;font-size:14px;color:#f2f2f2;font-weight:normal;">Rows</div>
<svg style="position:absolute;left:165px;top:406px" width="13" height="15" viewBox="0 0 13 15"><path d="M12.2 1.3 H1.3 L6.8 7.4 L1.3 13.6 H12.2" fill="none" stroke="#686868" stroke-width="1.9"/></svg>
<div class="t" style="left:183.00px;top:406.23px;font-size:14px;color:#f2f2f2;font-weight:normal;">Values</div>
<div style="position:absolute;left:50px;top:427.3px;width:100px;height:22px;border:1px solid #5a5a5a;"></div>
<div class="t" style="left:57.60px;top:431.53px;font-size:14px;color:#f2f2f2;font-weight:normal;">Country</div>
<div style="position:absolute;left:165.5px;top:427.3px;width:100px;height:22px;border:1px solid #5a5a5a;"></div>
<div class="t" style="left:173.00px;top:431.53px;font-size:14px;color:#f2f2f2;font-weight:normal;">Sales (Sum)</div>
<div style="position:absolute;left:55px;top:507px;width:12px;height:12px;border:1px solid #6e6e6e;"></div>
<div class="t" style="left:73.00px;top:506.53px;font-size:14px;color:#f2f2f2;font-weight:normal;">Defer Updates</div>
<div style="position:absolute;left:186px;top:500.5px;width:78px;height:25px;border:1px solid #3e3e3e;background:#232323;"></div>
<div class="t" style="left:185.80px;top:507.60px;width:80px;text-align:center;font-size:12.6px;color:#7c7c7c;font-weight:normal;">UPDATE</div>
<div style="position:absolute;left:276px;top:96px;width:619px;height:1px;background:#575757;"></div>
<div style="position:absolute;left:283.5px;top:68.6px;width:42px;height:28.4px;border:1px solid #575757;border-bottom:none;border-radius:3px 3px 0 0;background:#242424;"></div>
<div class="t" style="left:291.00px;top:75.03px;font-size:14px;color:#f2f2f2;font-weight:normal;">Grid</div>
<div class="t" style="left:337.40px;top:75.03px;font-size:14px;color:#f2f2f2;font-weight:normal;">Chart</div>
<div class="t" style="left:391.70px;top:75.03px;font-size:14px;color:#f2f2f2;font-weight:normal;">Raw Data</div>
<div style="position:absolute;left:276px;top:97px;width:1px;height:415px;background:#575757;"></div>
<div style="position:absolute;left:276px;top:511px;width:619px;height:1px;background:#575757;"></div>
<div style="position:absolute;left:277px;top:98px;width:616px;height:23px;background:#232323;"></div>
<div style="position:absolute;left:277px;top:98px;width:617px;height:393px;overflow:hidden">
<div style="position:absolute;left:0.00px;top:23.00px;width:117.00px;height:21.00px;background:#222;"></div>
<div style="position:absolute;left:118.00px;top:23.00px;width:498.00px;height:21.00px;background:#333333;"></div>
<div style="position:absolute;left:0.00px;top:44.00px;width:117.00px;height:22.00px;background:#222;"></div>
<div style="position:absolute;left:118.00px;top:44.00px;width:498.00px;height:22.00px;background:#2d2b2a;"></div>
<div style="position:absolute;left:0.00px;top:66.00px;width:117.00px;height:22.00px;background:#222;"></div>
<div style="position:absolute;left:118.00px;top:66.00px;width:498.00px;height:22.00px;background:#333333;"></div>
<div style="position:absolute;left:0.00px;top:88.00px;width:117.00px;height:22.00px;background:#222;"></div>
<div style="position:absolute;left:118.00px;top:88.00px;width:498.00px;height:22.00px;background:#2d2b2a;"></div>
<div style="position:absolute;left:0.00px;top:110.00px;width:117.00px;height:23.00px;background:#222;"></div>
<div style="position:absolute;left:118.00px;top:110.00px;width:498.00px;height:23.00px;background:#333333;"></div>
<div style="position:absolute;left:0.00px;top:133.00px;width:117.00px;height:22.00px;background:#222;"></div>
<div style="position:absolute;left:118.00px;top:133.00px;width:498.00px;height:22.00px;background:#2d2b2a;"></div>
<div style="position:absolute;left:0.00px;top:155.00px;width:117.00px;height:22.00px;background:#222;"></div>
<div style="position:absolute;left:118.00px;top:155.00px;width:498.00px;height:22.00px;background:#333333;"></div>
<div style="position:absolute;left:0.00px;top:177.00px;width:117.00px;height:22.00px;background:#222;"></div>
<div style="position:absolute;left:118.00px;top:177.00px;width:498.00px;height:22.00px;background:#2d2b2a;"></div>
<div style="position:absolute;left:0.00px;top:199.00px;width:117.00px;height:22.00px;background:#222;"></div>
<div style="position:absolute;left:118.00px;top:199.00px;width:498.00px;height:22.00px;background:#333333;"></div>
<div style="position:absolute;left:0.00px;top:221.00px;width:117.00px;height:22.00px;background:#222;"></div>
<div style="position:absolute;left:118.00px;top:221.00px;width:498.00px;height:22.00px;background:#2d2b2a;"></div>
<div style="position:absolute;left:0.00px;top:243.00px;width:117.00px;height:23.00px;background:#222;"></div>
<div style="position:absolute;left:118.00px;top:243.00px;width:498.00px;height:23.00px;background:#333333;"></div>
<div style="position:absolute;left:0.00px;top:266.00px;width:117.00px;height:22.00px;background:#222;"></div>
<div style="position:absolute;left:118.00px;top:266.00px;width:498.00px;height:22.00px;background:#2d2b2a;"></div>
<div style="position:absolute;left:0.00px;top:288.00px;width:117.00px;height:22.00px;background:#222;"></div>
<div style="position:absolute;left:118.00px;top:288.00px;width:498.00px;height:22.00px;background:#333333;"></div>
<div style="position:absolute;left:0.00px;top:310.00px;width:117.00px;height:22.00px;background:#222;"></div>
<div style="position:absolute;left:118.00px;top:310.00px;width:498.00px;height:22.00px;background:#333333;"></div>
<div style="position:absolute;left:0.00px;top:332.00px;width:117.00px;height:22.00px;background:#222;"></div>
<div style="position:absolute;left:118.00px;top:332.00px;width:498.00px;height:22.00px;background:#2d2b2a;"></div>
<div style="position:absolute;left:0.00px;top:354.00px;width:117.00px;height:23.00px;background:#222;"></div>
<div style="position:absolute;left:118.00px;top:354.00px;width:498.00px;height:23.00px;background:#333333;"></div>
<div style="position:absolute;left:0.00px;top:377.00px;width:117.00px;height:22.00px;background:#222;"></div>
<div style="position:absolute;left:118.00px;top:377.00px;width:498.00px;height:22.00px;background:#2d2b2a;"></div>
<div style="position:absolute;left:1.00px;top:23.00px;width:615.00px;height:1.00px;background:#5b5b5b;"></div>
<div style="position:absolute;left:1.00px;top:44.00px;width:615.00px;height:1.00px;background:#5b5b5b;"></div>
<div style="position:absolute;left:1.00px;top:66.00px;width:615.00px;height:1.00px;background:#5b5b5b;"></div>
<div style="position:absolute;left:1.00px;top:88.00px;width:615.00px;height:1.00px;background:#5b5b5b;"></div>
<div style="position:absolute;left:1.00px;top:110.00px;width:615.00px;height:1.00px;background:#5b5b5b;"></div>
<div style="position:absolute;left:1.00px;top:133.00px;width:615.00px;height:1.00px;background:#5b5b5b;"></div>
<div style="position:absolute;left:1.00px;top:155.00px;width:615.00px;height:1.00px;background:#5b5b5b;"></div>
<div style="position:absolute;left:1.00px;top:177.00px;width:615.00px;height:1.00px;background:#5b5b5b;"></div>
<div style="position:absolute;left:1.00px;top:199.00px;width:615.00px;height:1.00px;background:#5b5b5b;"></div>
<div style="position:absolute;left:1.00px;top:221.00px;width:615.00px;height:1.00px;background:#5b5b5b;"></div>
<div style="position:absolute;left:1.00px;top:243.00px;width:615.00px;height:1.00px;background:#5b5b5b;"></div>
<div style="position:absolute;left:1.00px;top:266.00px;width:615.00px;height:1.00px;background:#5b5b5b;"></div>
<div style="position:absolute;left:1.00px;top:288.00px;width:615.00px;height:1.00px;background:#5b5b5b;"></div>
<div style="position:absolute;left:1.00px;top:310.00px;width:615.00px;height:1.00px;background:#5b5b5b;"></div>
<div style="position:absolute;left:1.00px;top:332.00px;width:615.00px;height:1.00px;background:#5b5b5b;"></div>
<div style="position:absolute;left:1.00px;top:354.00px;width:615.00px;height:1.00px;background:#5b5b5b;"></div>
<div style="position:absolute;left:1.00px;top:377.00px;width:615.00px;height:1.00px;background:#5b5b5b;"></div>
<div style="position:absolute;left:117.00px;top:0.00px;width:1.00px;height:393.00px;background:#5b5b5b;"></div>
<div style="position:absolute;left:183.00px;top:0.00px;width:1.00px;height:393.00px;background:#5b5b5b;"></div>
<div style="position:absolute;left:278.00px;top:0.00px;width:1.00px;height:393.00px;background:#5b5b5b;"></div>
<div style="position:absolute;left:383.00px;top:0.00px;width:1.00px;height:393.00px;background:#5b5b5b;"></div>
<div style="position:absolute;left:489.00px;top:0.00px;width:1.00px;height:393.00px;background:#5b5b5b;"></div>
<div style="position:absolute;left:616.00px;top:0.00px;width:1.00px;height:393.00px;background:#5b5b5b;"></div>
<div class="t" style="left:6.00px;top:6.33px;font-size:14px;color:#f2f2f2;font-weight:normal">Country</div>
<div class="t" style="left:117.00px;top:6.33px;font-size:14px;color:#f2f2f2;font-weight:normal"><span style="position:relative;left:-3px">d'érable</span></div>
<div style="position:absolute;left:0;top:0;width:117px;height:23px;background:#232323"></div>
<div class="t" style="left:6.00px;top:6.33px;font-size:14px;color:#f2f2f2;font-weight:normal">Country</div>
<div class="t" style="left:183.70px;top:6.33px;width:94px;text-align:center;font-size:14px;color:#f2f2f2;font-weight:normal">Spegesild</div>
<div class="t" style="left:278.00px;top:6.33px;width:104px;text-align:center;font-size:14px;color:#f2f2f2;font-weight:normal">Steeleye Stout</div>
<div class="t" style="left:383.30px;top:6.33px;width:104px;text-align:center;font-size:14px;color:#f2f2f2;font-weight:normal">Tarte au sucre</div>
<div class="t" style="left:488.80px;top:6.33px;width:126px;text-align:center;font-size:14px;color:#f2f2f2;font-weight:normal">Teatime Chocolate</div>
<div class="t" style="left:6.00px;top:27.93px;font-size:14px;color:#f2f2f2;font-weight:normal">Canada</div>
<div class="t" style="left:86.00px;top:27.93px;width:90px;text-align:right;font-size:14px;color:#f2f2f2;font-weight:normal">143</div>
<div class="t" style="left:181.00px;top:27.93px;width:90px;text-align:right;font-size:14px;color:#f2f2f2;font-weight:normal">0</div>
<div class="t" style="left:286.00px;top:27.93px;width:90px;text-align:right;font-size:14px;color:#f2f2f2;font-weight:normal">691</div>
<div class="t" style="left:392.00px;top:27.93px;width:90px;text-align:right;font-size:14px;color:#f2f2f2;font-weight:normal">5,774</div>
<div class="t" style="left:519.00px;top:27.93px;width:90px;text-align:right;font-size:14px;color:#f2f2f2;font-weight:normal">0</div>
<div class="t" style="left:6.00px;top:48.93px;font-size:14px;color:#f2f2f2;font-weight:normal">Denmark</div>
<div class="t" style="left:86.00px;top:48.93px;width:90px;text-align:right;font-size:14px;color:#f2f2f2;font-weight:normal">1,026</div>
<div class="t" style="left:181.00px;top:48.93px;width:90px;text-align:right;font-size:14px;color:#f2f2f2;font-weight:normal">14</div>
<div class="t" style="left:286.00px;top:48.93px;width:90px;text-align:right;font-size:14px;color:#f2f2f2;font-weight:normal">180</div>
<div class="t" style="left:392.00px;top:48.93px;width:90px;text-align:right;font-size:14px;color:#f2f2f2;font-weight:normal">924</div>
<div class="t" style="left:519.00px;top:48.93px;width:90px;text-align:right;font-size:14px;color:#f2f2f2;font-weight:normal">0</div>
<div class="t" style="left:6.00px;top:70.93px;font-size:14px;color:#f2f2f2;font-weight:normal">Finland</div>
<div class="t" style="left:86.00px;top:70.93px;width:90px;text-align:right;font-size:14px;color:#f2f2f2;font-weight:normal">713</div>
<div class="t" style="left:181.00px;top:70.93px;width:90px;text-align:right;font-size:14px;color:#f2f2f2;font-weight:normal">0</div>
<div class="t" style="left:286.00px;top:70.93px;width:90px;text-align:right;font-size:14px;color:#f2f2f2;font-weight:normal">108</div>
<div class="t" style="left:392.00px;top:70.93px;width:90px;text-align:right;font-size:14px;color:#f2f2f2;font-weight:normal">0</div>
<div class="t" style="left:519.00px;top:70.93px;width:90px;text-align:right;font-size:14px;color:#f2f2f2;font-weight:normal">256</div>
<div class="t" style="left:6.00px;top:92.93px;font-size:14px;color:#f2f2f2;font-weight:normal">France</div>
<div class="t" style="left:86.00px;top:92.93px;width:90px;text-align:right;font-size:14px;color:#f2f2f2;font-weight:normal">727</div>
<div class="t" style="left:181.00px;top:92.93px;width:90px;text-align:right;font-size:14px;color:#f2f2f2;font-weight:normal">559</div>
<div class="t" style="left:286.00px;top:92.93px;width:90px;text-align:right;font-size:14px;color:#f2f2f2;font-weight:normal">810</div>
<div class="t" style="left:392.00px;top:92.93px;width:90px;text-align:right;font-size:14px;color:#f2f2f2;font-weight:normal">7,420</div>
<div class="t" style="left:519.00px;top:92.93px;width:90px;text-align:right;font-size:14px;color:#f2f2f2;font-weight:normal">69</div>
<div class="t" style="left:6.00px;top:114.93px;font-size:14px;color:#f2f2f2;font-weight:normal">Germany</div>
<div class="t" style="left:86.00px;top:114.93px;width:90px;text-align:right;font-size:14px;color:#f2f2f2;font-weight:normal">821</div>
<div class="t" style="left:181.00px;top:114.93px;width:90px;text-align:right;font-size:14px;color:#f2f2f2;font-weight:normal">738</div>
<div class="t" style="left:286.00px;top:114.93px;width:90px;text-align:right;font-size:14px;color:#f2f2f2;font-weight:normal">2,639</div>
<div class="t" style="left:392.00px;top:114.93px;width:90px;text-align:right;font-size:14px;color:#f2f2f2;font-weight:normal">9,369</div>
<div class="t" style="left:519.00px;top:114.93px;width:90px;text-align:right;font-size:14px;color:#f2f2f2;font-weight:normal">1,942</div>
<div class="t" style="left:6.00px;top:137.93px;font-size:14px;color:#f2f2f2;font-weight:normal">Ireland</div>
<div class="t" style="left:86.00px;top:137.93px;width:90px;text-align:right;font-size:14px;color:#f2f2f2;font-weight:normal">0</div>
<div class="t" style="left:181.00px;top:137.93px;width:90px;text-align:right;font-size:14px;color:#f2f2f2;font-weight:normal">0</div>
<div class="t" style="left:286.00px;top:137.93px;width:90px;text-align:right;font-size:14px;color:#f2f2f2;font-weight:normal">0</div>
<div class="t" style="left:392.00px;top:137.93px;width:90px;text-align:right;font-size:14px;color:#f2f2f2;font-weight:normal">591</div>
<div class="t" style="left:519.00px;top:137.93px;width:90px;text-align:right;font-size:14px;color:#f2f2f2;font-weight:normal">0</div>
<div class="t" style="left:6.00px;top:159.93px;font-size:14px;color:#f2f2f2;font-weight:normal">Italy</div>
<div class="t" style="left:86.00px;top:159.93px;width:90px;text-align:right;font-size:14px;color:#f2f2f2;font-weight:normal">0</div>
<div class="t" style="left:181.00px;top:159.93px;width:90px;text-align:right;font-size:14px;color:#f2f2f2;font-weight:normal">192</div>
<div class="t" style="left:286.00px;top:159.93px;width:90px;text-align:right;font-size:14px;color:#f2f2f2;font-weight:normal">0</div>
<div class="t" style="left:392.00px;top:159.93px;width:90px;text-align:right;font-size:14px;color:#f2f2f2;font-weight:normal">444</div>
<div class="t" style="left:519.00px;top:159.93px;width:90px;text-align:right;font-size:14px;color:#f2f2f2;font-weight:normal">46</div>
<div class="t" style="left:6.00px;top:181.93px;font-size:14px;color:#f2f2f2;font-weight:normal">Mexico</div>
<div class="t" style="left:86.00px;top:181.93px;width:90px;text-align:right;font-size:14px;color:#f2f2f2;font-weight:normal">0</div>
<div class="t" style="left:181.00px;top:181.93px;width:90px;text-align:right;font-size:14px;color:#f2f2f2;font-weight:normal">0</div>
<div class="t" style="left:286.00px;top:181.93px;width:90px;text-align:right;font-size:14px;color:#f2f2f2;font-weight:normal">0</div>
<div class="t" style="left:392.00px;top:181.93px;width:90px;text-align:right;font-size:14px;color:#f2f2f2;font-weight:normal">0</div>
<div class="t" style="left:519.00px;top:181.93px;width:90px;text-align:right;font-size:14px;color:#f2f2f2;font-weight:normal">129</div>
<div class="t" style="left:6.00px;top:203.93px;font-size:14px;color:#f2f2f2;font-weight:normal">Norway</div>
<div class="t" style="left:86.00px;top:203.93px;width:90px;text-align:right;font-size:14px;color:#f2f2f2;font-weight:normal">0</div>
<div class="t" style="left:181.00px;top:203.93px;width:90px;text-align:right;font-size:14px;color:#f2f2f2;font-weight:normal">0</div>
<div class="t" style="left:286.00px;top:203.93px;width:90px;text-align:right;font-size:14px;color:#f2f2f2;font-weight:normal">144</div>
<div class="t" style="left:392.00px;top:203.93px;width:90px;text-align:right;font-size:14px;color:#f2f2f2;font-weight:normal">0</div>
<div class="t" style="left:519.00px;top:203.93px;width:90px;text-align:right;font-size:14px;color:#f2f2f2;font-weight:normal">18</div>
<div class="t" style="left:6.00px;top:225.93px;font-size:14px;color:#f2f2f2;font-weight:normal">Poland</div>
<div class="t" style="left:86.00px;top:225.93px;width:90px;text-align:right;font-size:14px;color:#f2f2f2;font-weight:normal">627</div>
<div class="t" style="left:181.00px;top:225.93px;width:90px;text-align:right;font-size:14px;color:#f2f2f2;font-weight:normal">0</div>
<div class="t" style="left:286.00px;top:225.93px;width:90px;text-align:right;font-size:14px;color:#f2f2f2;font-weight:normal">54</div>
<div class="t" style="left:392.00px;top:225.93px;width:90px;text-align:right;font-size:14px;color:#f2f2f2;font-weight:normal">592</div>
<div class="t" style="left:519.00px;top:225.93px;width:90px;text-align:right;font-size:14px;color:#f2f2f2;font-weight:normal">0</div>
<div class="t" style="left:6.00px;top:247.93px;font-size:14px;color:#f2f2f2;font-weight:normal">Portugal</div>
<div class="t" style="left:86.00px;top:247.93px;width:90px;text-align:right;font-size:14px;color:#f2f2f2;font-weight:normal">0</div>
<div class="t" style="left:181.00px;top:247.93px;width:90px;text-align:right;font-size:14px;color:#f2f2f2;font-weight:normal">0</div>
<div class="t" style="left:286.00px;top:247.93px;width:90px;text-align:right;font-size:14px;color:#f2f2f2;font-weight:normal">306</div>
<div class="t" style="left:392.00px;top:247.93px;width:90px;text-align:right;font-size:14px;color:#f2f2f2;font-weight:normal">0</div>
<div class="t" style="left:519.00px;top:247.93px;width:90px;text-align:right;font-size:14px;color:#f2f2f2;font-weight:normal">0</div>
<div class="t" style="left:6.00px;top:270.93px;font-size:14px;color:#f2f2f2;font-weight:normal">Spain</div>
<div class="t" style="left:86.00px;top:270.93px;width:90px;text-align:right;font-size:14px;color:#f2f2f2;font-weight:normal">256</div>
<div class="t" style="left:181.00px;top:270.93px;width:90px;text-align:right;font-size:14px;color:#f2f2f2;font-weight:normal">0</div>
<div class="t" style="left:286.00px;top:270.93px;width:90px;text-align:right;font-size:14px;color:#f2f2f2;font-weight:normal">58</div>
<div class="t" style="left:392.00px;top:270.93px;width:90px;text-align:right;font-size:14px;color:#f2f2f2;font-weight:normal">937</div>
<div class="t" style="left:519.00px;top:270.93px;width:90px;text-align:right;font-size:14px;color:#f2f2f2;font-weight:normal">99</div>
<div class="t" style="left:6.00px;top:292.93px;font-size:14px;color:#f2f2f2;font-weight:normal">Sweden</div>
<div class="t" style="left:86.00px;top:292.93px;width:90px;text-align:right;font-size:14px;color:#f2f2f2;font-weight:normal">684</div>
<div class="t" style="left:181.00px;top:292.93px;width:90px;text-align:right;font-size:14px;color:#f2f2f2;font-weight:normal">300</div>
<div class="t" style="left:286.00px;top:292.93px;width:90px;text-align:right;font-size:14px;color:#f2f2f2;font-weight:normal">115</div>
<div class="t" style="left:392.00px;top:292.93px;width:90px;text-align:right;font-size:14px;color:#f2f2f2;font-weight:normal">251</div>
<div class="t" style="left:519.00px;top:292.93px;width:90px;text-align:right;font-size:14px;color:#f2f2f2;font-weight:normal">230</div>
<div class="t" style="left:6.00px;top:314.93px;font-size:14px;color:#f2f2f2;font-weight:normal">UK</div>
<div class="t" style="left:86.00px;top:314.93px;width:90px;text-align:right;font-size:14px;color:#f2f2f2;font-weight:normal">855</div>
<div class="t" style="left:181.00px;top:314.93px;width:90px;text-align:right;font-size:14px;color:#f2f2f2;font-weight:normal">499</div>
<div class="t" style="left:286.00px;top:314.93px;width:90px;text-align:right;font-size:14px;color:#f2f2f2;font-weight:normal">1,080</div>
<div class="t" style="left:392.00px;top:314.93px;width:90px;text-align:right;font-size:14px;color:#f2f2f2;font-weight:normal">592</div>
<div class="t" style="left:519.00px;top:314.93px;width:90px;text-align:right;font-size:14px;color:#f2f2f2;font-weight:normal">46</div>
<div class="t" style="left:6.00px;top:336.93px;font-size:14px;color:#f2f2f2;font-weight:normal">USA</div>
<div class="t" style="left:86.00px;top:336.93px;width:90px;text-align:right;font-size:14px;color:#f2f2f2;font-weight:normal">3,141</div>
<div class="t" style="left:181.00px;top:336.93px;width:90px;text-align:right;font-size:14px;color:#f2f2f2;font-weight:normal">367</div>
<div class="t" style="left:286.00px;top:336.93px;width:90px;text-align:right;font-size:14px;color:#f2f2f2;font-weight:normal">2,454</div>
<div class="t" style="left:392.00px;top:336.93px;width:90px;text-align:right;font-size:14px;color:#f2f2f2;font-weight:normal">15,648</div>
<div class="t" style="left:519.00px;top:336.93px;width:90px;text-align:right;font-size:14px;color:#f2f2f2;font-weight:normal">1,160</div>
<div class="t" style="left:6.00px;top:358.93px;font-size:14px;color:#f2f2f2;font-weight:normal">Venezuela</div>
<div class="t" style="left:86.00px;top:358.93px;width:90px;text-align:right;font-size:14px;color:#f2f2f2;font-weight:normal">0</div>
<div class="t" style="left:181.00px;top:358.93px;width:90px;text-align:right;font-size:14px;color:#f2f2f2;font-weight:normal">422</div>
<div class="t" style="left:286.00px;top:358.93px;width:90px;text-align:right;font-size:14px;color:#f2f2f2;font-weight:normal">1,274</div>
<div class="t" style="left:392.00px;top:358.93px;width:90px;text-align:right;font-size:14px;color:#f2f2f2;font-weight:normal">0</div>
<div class="t" style="left:519.00px;top:358.93px;width:90px;text-align:right;font-size:14px;color:#f2f2f2;font-weight:normal">318</div>
<div class="t b" style="left:6.00px;top:380.33px;font-size:14px;color:#f2f2f2;font-weight:bold">Total</div>
<div class="t b" style="left:86.00px;top:380.33px;width:90px;text-align:right;font-size:14px;color:#f2f2f2;font-weight:bold">14,353</div>
<div class="t b" style="left:181.00px;top:380.33px;width:90px;text-align:right;font-size:14px;color:#f2f2f2;font-weight:bold">883</div>
<div class="t b" style="left:286.00px;top:380.33px;width:90px;text-align:right;font-size:14px;color:#f2f2f2;font-weight:bold">13,644</div>
<div class="t b" style="left:392.00px;top:380.33px;width:90px;text-align:right;font-size:14px;color:#f2f2f2;font-weight:bold">47,235</div>
<div class="t b" style="left:519.00px;top:380.33px;width:90px;text-align:right;font-size:14px;color:#f2f2f2;font-weight:bold">5,863</div>
</div>
<div style="position:absolute;left:277px;top:491px;width:616px;height:20px;background:#2d2b2a;"></div>
<div style="position:absolute;left:281px;top:493px;width:15px;height:16px;background:#2a2929;"></div>
<svg style="position:absolute;left:283px;top:496px" width="10" height="10" viewBox="0 0 10 10"><path d="M7 1 L2.5 5 L7 9 Z" fill="#8e8e8e"/></svg>
<div style="position:absolute;left:758.5px;top:492px;width:46.5px;height:16px;background:#313131;"></div>
<div style="position:absolute;left:892px;top:491px;width:1px;height:20px;background:#3a3a3a;"></div>
<div class="t" style="left:734.00px;top:514.83px;width:150px;text-align:right;font-size:14px;color:#f2f2f2;font-weight:normal;">2,155 Records</div>
</div>
</body></html>
